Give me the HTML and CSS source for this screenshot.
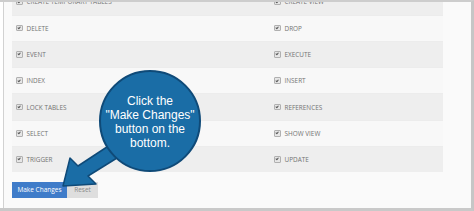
FILE: index.html
```html
<!DOCTYPE html>
<html lang="en">
<head>
  <meta charset="UTF-8">
  <title>Privileges</title>
  <link rel="stylesheet" href="styles.css">
</head>
<body>

<!-- Privileges panel -->
<div class="frame">
  <div class="content">
    <div class="privileges">
      <div class="row dark">
        <label class="cell"><span class="check"></span>CREATE TEMPORARY TABLES</label>
        <label class="cell"><span class="check"></span>CREATE VIEW</label>
      </div>
      <div class="row">
        <label class="cell"><span class="check"></span>DELETE</label>
        <label class="cell"><span class="check"></span>DROP</label>
      </div>
      <div class="row dark">
        <label class="cell"><span class="check"></span>EVENT</label>
        <label class="cell"><span class="check"></span>EXECUTE</label>
      </div>
      <div class="row">
        <label class="cell"><span class="check"></span>INDEX</label>
        <label class="cell"><span class="check"></span>INSERT</label>
      </div>
      <div class="row dark">
        <label class="cell"><span class="check"></span>LOCK TABLES</label>
        <label class="cell"><span class="check"></span>REFERENCES</label>
      </div>
      <div class="row">
        <label class="cell"><span class="check"></span>SELECT</label>
        <label class="cell"><span class="check"></span>SHOW VIEW</label>
      </div>
      <div class="row dark">
        <label class="cell"><span class="check"></span>TRIGGER</label>
        <label class="cell"><span class="check"></span>UPDATE</label>
      </div>
    </div>

    <div class="actions">
      <button class="btn primary">Make Changes</button>
      <button class="btn reset">Reset</button>
    </div>
  </div>

  <!-- Callout bubble -->
  <div class="callout">
    <svg width="150" height="125" viewBox="0 0 150 125">
      <polygon points="58,75 23,98 15,90 8,118 41,116 33,108 70,85" fill="#1a6da6" stroke="#0f4a78" stroke-width="1.5" stroke-linejoin="round"/>
      <circle cx="95" cy="53" r="50" fill="#1a6da6" stroke="#0f4a78" stroke-width="2"/>
    </svg>
    <div class="callout-text">Click the<br>"Make Changes"<br>button on the<br>bottom.</div>
  </div>
</div>

</body>
</html>
```

FILE: styles.css
```css
body {
  margin: 0;
  background: #ffffff;
}

.frame {
  position: relative;
  width: 474px;
  height: 211px;
  box-sizing: border-box;
  border-top: 2px solid #cdcdcd;
  border-right: 3px solid #c6c6c6;
  border-bottom: 3px solid #c9c9c9;
  padding-left: 3px;
  overflow: hidden;
}

.content {
  height: 100%;
  border-left: 1px solid #d2d2d2;
  background: #fafafa;
  padding-left: 8px;
  overflow: hidden;
}

.privileges {
  width: 431px;
  margin-top: -13.8px;
}

.row {
  display: grid;
  grid-template-columns: 258px 1fr;
  height: 26.3px;
  align-items: center;
  background: #f8f8f8;
  border-top: 1px solid #ececec;
  box-sizing: border-box;
}

.row.dark {
  background: #eeeeee;
}

.cell {
  display: flex;
  align-items: center;
  padding-left: 4px;
  font-family: "Open Sans", sans-serif;
  font-size: 6.4px;
  color: #737373;
}

/* small ticked checkbox */
.check {
  position: relative;
  width: 4.5px;
  height: 4.5px;
  margin-right: 4px;
  background: #e6e6e6;
  border: 0.5px solid #b0b0b0;
  border-radius: 1px;
}

.check::after {
  content: "";
  position: absolute;
  left: 1.3px;
  top: 0.1px;
  width: 1px;
  height: 2.4px;
  border-right: 0.8px solid #555;
  border-bottom: 0.8px solid #555;
  transform: rotate(40deg);
}

.actions {
  display: flex;
  margin-top: 9.4px;
}

.btn {
  height: 16.6px;
  border: none;
  padding: 0;
  font-family: "Open Sans", sans-serif;
  font-size: 6.5px;
  white-space: nowrap;
  cursor: pointer;
}

.btn.primary {
  width: 55px;
  background: #3f7cc9;
  color: #ffffff;
}

.btn.reset {
  width: 31px;
  background: #dedede;
  color: #8a8a8a;
}

.callout {
  position: absolute;
  left: 55px;
  top: 66px;
  width: 150px;
  height: 125px;
}

.callout svg {
  display: block;
}

.callout-text {
  position: absolute;
  left: 45px;
  top: 26px;
  width: 100px;
  text-align: center;
  font-family: "Liberation Sans", Arial, sans-serif;
  font-size: 12px;
  line-height: 14px;
  color: #ffffff;
}
```
